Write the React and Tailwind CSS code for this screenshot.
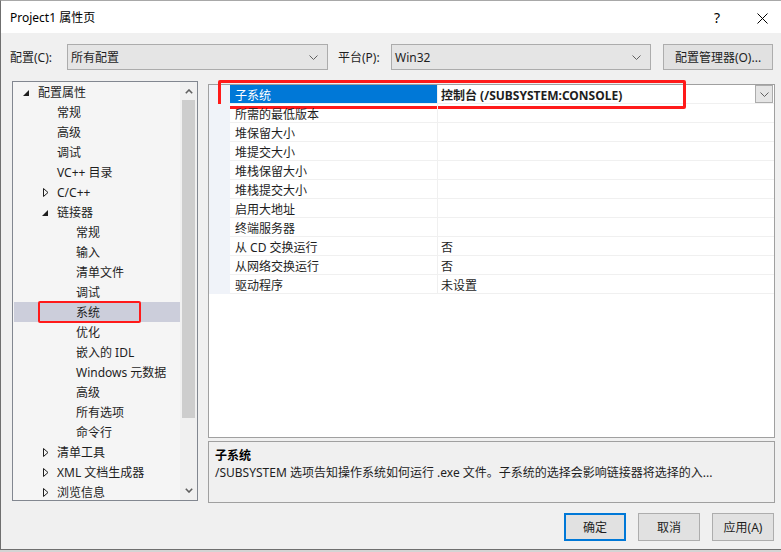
import { useState } from "react";

const treeItems = [
    { label: "配置属性", level: 0, arrow: "open" },
    { label: "常规", level: 1 },
    { label: "高级", level: 1 },
    { label: "调试", level: 1 },
    { label: "VC++ 目录", level: 1 },
    { label: "C/C++", level: 1, arrow: "closed" },
    { label: "链接器", level: 1, arrow: "open" },
    { label: "常规", level: 2 },
    { label: "输入", level: 2 },
    { label: "清单文件", level: 2 },
    { label: "调试", level: 2 },
    { label: "系统", level: 2, marked: true },
    { label: "优化", level: 2 },
    { label: "嵌入的 IDL", level: 2 },
    { label: "Windows 元数据", level: 2 },
    { label: "高级", level: 2 },
    { label: "所有选项", level: 2 },
    { label: "命令行", level: 2 },
    { label: "清单工具", level: 1, arrow: "closed" },
    { label: "XML 文档生成器", level: 1, arrow: "closed" },
    { label: "浏览信息", level: 1, arrow: "closed" },
]

const indent = ["pl-[10px]", "pl-[29px]", "pl-[48px]"]

const properties = [
    { name: "子系统", value: "控制台 (/SUBSYSTEM:CONSOLE)" },
    { name: "所需的最低版本", value: "" },
    { name: "堆保留大小", value: "" },
    { name: "堆提交大小", value: "" },
    { name: "堆栈保留大小", value: "" },
    { name: "堆栈提交大小", value: "" },
    { name: "启用大地址", value: "" },
    { name: "终端服务器", value: "" },
    { name: "从 CD 交换运行", value: "否" },
    { name: "从网络交换运行", value: "否" },
    { name: "驱动程序", value: "未设置" },
]

function Chevron({ className = "" }) {
    return (
        <svg width="9" height="5" viewBox="0 0 9 5" className={className}>
            <polyline points="0.5,0.5 4.5,4.5 8.5,0.5" fill="none" stroke="#606060" strokeWidth="1" />
        </svg>
    )
}

function Combo({ value, width }) {
    return (
        <div className={`${width} h-[26px] flex items-center justify-between bg-[#e5e5e5] border border-[#acacac] pl-[3px] pr-[9px]`}>
            <span className="pt-[2px]">{value}</span>
            <Chevron />
        </div>
    )
}

function TreeArrow({ type }) {
    if (type === "open") {
        return (
            <svg width="7" height="7" viewBox="0 0 7 7" className="mt-[3px]">
                <polygon points="6,0 6,6 0,6" fill="#1e1e1e" />
            </svg>
        )
    }
    if (type === "closed") {
        return (
            <svg width="6" height="9" viewBox="0 0 6 9" className="ml-[1px] mt-[1px]">
                <polygon points="0.5,0.5 5,4.5 0.5,8.5" fill="none" stroke="#1e1e1e" strokeWidth="1" />
            </svg>
        )
    }
    return null
}

function Tree() {
    const [selected, setSelected] = useState(11)

    return (
        <div className="w-[186px] h-[420px] flex border border-[#828790] bg-[#f5f5f5]">
            <div className="flex-1 flex flex-col overflow-hidden">
                {treeItems.map((item, i) => (
                    <div
                        key={i}
                        onClick={() => setSelected(i)}
                        className={`relative h-[20px] shrink-0 flex items-center ${indent[item.level]} ${selected === i ? "bg-[#cccedb] ml-[1px]" : ""}`}
                    >
                        <div className="w-[15px] flex items-center">
                            <TreeArrow type={item.arrow} />
                        </div>
                        <span className={`whitespace-nowrap pt-[2px] ${selected === i ? "-ml-[1px]" : ""}`}>{item.label}</span>
                        {item.marked && (
                            <div className="absolute left-[24px] top-[-1px] w-[103px] h-[22px] border-[2.5px] border-[#ff1a1a] rounded-[2px]" />
                        )}
                    </div>
                ))}
            </div>
            {/* vertical scrollbar */}
            <div className="w-[17px] flex flex-col bg-[#f0f0f0]">
                <div className="h-[18px] flex items-center justify-center">
                    <svg width="8" height="5" viewBox="0 0 8 5">
                        <polyline points="0.8,4.2 4,1 7.2,4.2" fill="none" stroke="#606060" strokeWidth="1.6" />
                    </svg>
                </div>
                <div className="mx-[2px] h-[318px] bg-[#cdcdcd]" />
                <div className="flex-1 flex items-end justify-center pb-[7px]">
                    <svg width="8" height="5" viewBox="0 0 8 5">
                        <polyline points="0.8,0.8 4,4 7.2,0.8" fill="none" stroke="#606060" strokeWidth="1.6" />
                    </svg>
                </div>
            </div>
        </div>
    )
}

function PropertyGrid() {
    return (
        <div className="h-[354px] flex flex-col border border-[#a0a0a0] bg-white">
            {properties.map((p, i) => (
                <div key={i} className="relative h-[19px] shrink-0 flex">
                    <div className="w-[21px] bg-[#f0f3f9]" />
                    <div className={`w-[207px] flex items-center pl-[5px] pt-[4px] border-b border-[#f0f0f0] ${i === 0 ? "bg-[#0078d7] text-white border-[#0078d7]" : ""}`}>
                        <span className="whitespace-nowrap">{p.name}</span>
                    </div>
                    <div className="flex-1 flex items-center justify-between pl-[3px] border-l border-b border-[#f0f0f0]">
                        <span className={`whitespace-nowrap pt-[4px] ${i === 0 ? "font-bold" : ""}`}>{p.value}</span>
                        {i === 0 && (
                            <div className="w-[18px] h-[18px] mr-[1px] flex items-center justify-center bg-[#e5e5e5] border border-[#acacac]">
                                <Chevron />
                            </div>
                        )}
                    </div>
                    {i === 0 && (
                        <div className="absolute left-[9px] top-[-5px] w-[468px] h-[29px] border-[3px] border-[#ff1a1a] rounded-[2px]" />
                    )}
                </div>
            ))}
        </div>
    )
}

function DialogButton({ children, primary }) {
    return (
        <button className={`w-[62px] h-[28px] flex items-center justify-center pt-[1px] bg-[#e1e1e1] ${primary ? "border-2 border-[#0078d7]" : "border border-[#adadad]"}`}>
            {children}
        </button>
    )
}

export default function App() {
    return (
        <div className="w-[781px] h-[552px] bg-[#d4d4d4] overflow-hidden text-[12px] leading-none text-[#1e1e1e] font-['Noto_Sans','Noto_Sans_CJK_SC',sans-serif]">
            <div className="h-[550px] flex flex-col bg-[#f0f0f0] border-l border-t border-b border-[#6f6f6f] border-t-[#a8a8a8]">
                {/* title bar */}
                <div className="h-[32px] shrink-0 flex items-center justify-between bg-white pl-[9px] pr-[13px] pt-[2px]">
                    <span className="text-black">Project1 属性页</span>
                    <div className="flex items-center gap-[37px]">
                        <span className="text-[14px] text-black">?</span>
                        <svg width="11" height="11" viewBox="0 0 11 11">
                            <path d="M0.5 0.5 L10.5 10.5 M10.5 0.5 L0.5 10.5" stroke="#000" strokeWidth="1" />
                        </svg>
                    </div>
                </div>

                {/* configuration bar */}
                <div className="mt-[11px] h-[26px] shrink-0 flex items-center pl-[9px]">
                    <span className="w-[57px] pt-[2px]">配置(C):</span>
                    <Combo value="所有配置" width="w-[261px]" />
                    <span className="w-[63px] pl-[10px] pt-[2px]">平台(P):</span>
                    <Combo value="Win32" width="w-[260px]" />
                    <button className="ml-[12px] w-[110px] h-[26px] flex items-center justify-center pt-[2px] bg-[#e1e1e1] border border-[#adadad]">
                        配置管理器(O)...
                    </button>
                </div>

                {/* tree + property grid */}
                <div className="mt-[11px] flex pl-[11px]">
                    <Tree />
                    <div className="ml-[10px] w-[567px] pt-[3px] flex flex-col">
                        <PropertyGrid />
                        <div className="mt-[3px] h-[62px] border border-[#a0a0a0] bg-[#f0f0f0] pl-[6px] pt-[8px] flex flex-col gap-[5px]">
                            <span className="font-bold text-black">子系统</span>
                            <span className="whitespace-nowrap">/SUBSYSTEM 选项告知操作系统如何运行 .exe 文件。子系统的选择会影响链接器将选择的入...</span>
                        </div>
                    </div>
                </div>

                {/* dialog buttons */}
                <div className="mt-[10px] flex justify-end gap-[12px] pr-[7px]">
                    <DialogButton primary>确定</DialogButton>
                    <DialogButton>取消</DialogButton>
                    <DialogButton>应用(A)</DialogButton>
                </div>
            </div>
        </div>
    );
}
